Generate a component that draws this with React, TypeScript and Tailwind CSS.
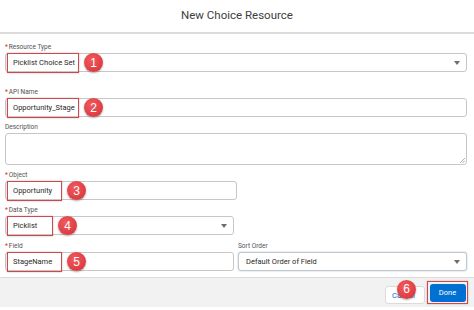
import type { ReactNode } from "react";

const Badge = ({ n }: { n: number }) => (
  <span className="shrink-0 flex items-center justify-center w-[19px] h-[19px] rounded-full bg-[radial-gradient(circle_at_40%_35%,#f05a5e,#d62f35)] text-white text-[12px] leading-none font-['Liberation_Sans',sans-serif] shadow-[0_1px_2px_rgba(0,0,0,0.35)]">
    {n}
  </span>
);

const Label = ({ text, required = true }: { text: string; required?: boolean }) => (
  <div className="h-[10px] mb-[1px] text-[6.5px] leading-[10px] text-[#54524f]">
    {required && <span className="text-[#c23934] mr-[1px]">*</span>}
    {text}
  </div>
);

const Arrow = () => (
  <svg className="ml-auto mr-[6px] shrink-0" width="6" height="4" viewBox="0 0 6 4">
    <path d="M0 0h6L3 4z" fill="#706e6b" />
  </svg>
);

const Box = ({ children, className = "" }: { children?: ReactNode; className?: string }) => (
  <div
    className={`h-[19px] border border-[#c9c7c5] rounded-[3px] bg-white flex items-center pl-[1px] text-[7.5px] text-[#2b2826] ${className}`}
  >
    {children}
  </div>
);

// value wrapped in the red highlight box, then the numbered badge
const Marked = ({ value, n, width }: { value: string; n: number; width: string }) => (
  <div className="flex items-center gap-[5px]">
    <span
      className={`h-[20px] ${width} flex items-center pl-[5px] border-[1.5px] border-[#d2474c] shadow-[0_0_2px_rgba(0,0,0,0.25)]`}
    >
      {value}
    </span>
    <Badge n={n} />
  </div>
);

export default function App() {
  return (
    <div className="w-[474px] h-[310px] bg-white flex flex-col font-['Roboto',sans-serif] overflow-hidden">
      <div className="h-[34px] shrink-0 border-b-2 border-[#dddbda] flex items-center justify-center text-[11.5px] text-[#3e3e3c]">
        New Choice Resource
      </div>

      <div className="flex-1 pl-[5px] pr-[7px] pt-[8px] flex flex-col">
        <div>
          <Label text="Resource Type" />
          <Box>
            <Marked value="Picklist Choice Set" n={1} width="w-[72px]" />
            <Arrow />
          </Box>
        </div>

        <div className="mt-[15px]">
          <Label text="API Name" />
          <Box>
            <Marked value="Opportunity_Stage" n={2} width="w-[72px]" />
          </Box>
        </div>

        <div className="mt-[5px]">
          <Label text="Description" required={false} />
          <div className="h-[32px] border border-[#c9c7c5] rounded-[3px] bg-white flex items-end justify-end p-[1px]">
            <svg width="5" height="5" viewBox="0 0 5 5">
              <path d="M5 0L0 5M5 2.5L2.5 5" stroke="#9a9a9a" strokeWidth="0.8" />
            </svg>
          </div>
        </div>

        <div className="mt-[5px] w-[232px]">
          <Label text="Object" />
          <Box>
            <Marked value="Opportunity" n={3} width="w-[55px]" />
          </Box>
        </div>

        <div className="mt-[5px] w-[229px]">
          <Label text="Data Type" />
          <Box className="h-[18px]">
            <Marked value="Picklist" n={4} width="w-[46px]" />
            <Arrow />
          </Box>
        </div>

        <div className="mt-[6px] flex gap-[4px]">
          <div className="w-[229px]">
            <Label text="Field" />
            <Box>
              <Marked value="StageName" n={5} width="w-[55px]" />
            </Box>
          </div>
          <div className="flex-1">
            <Label text="Sort Order" required={false} />
            <Box className="border-[#7fb8e6] shadow-[0_0_2px_#9fc9ef] pl-[7px]">
              <span>Default Order of Field</span>
              <Arrow />
            </Box>
          </div>
        </div>
      </div>

      <div className="h-[30px] shrink-0 bg-[#f3f2f2] border-t border-[#dddbda] flex items-center justify-end pr-[6px] gap-[2px]">
        <div className="relative">
          <button className="h-[18px] w-[40px] rounded-[3px] border border-[#dddbda] bg-white text-[7.5px] text-[#0070d2] pl-[6px] text-left">
            Cancel
          </button>
          <span className="absolute left-[12px] top-[-1px]">
            <Badge n={6} />
          </span>
        </div>
        <div className="p-[1.5px] border-[1.5px] border-[#d2474c] shadow-[0_0_2px_rgba(0,0,0,0.25)]">
          <button className="h-[18px] w-[36px] rounded-[3px] bg-[#0070d2] text-white text-[7.5px] flex items-center justify-center">
            Done
          </button>
        </div>
      </div>
      <div className="h-[3px] shrink-0 bg-white" />
    </div>
  );
}
